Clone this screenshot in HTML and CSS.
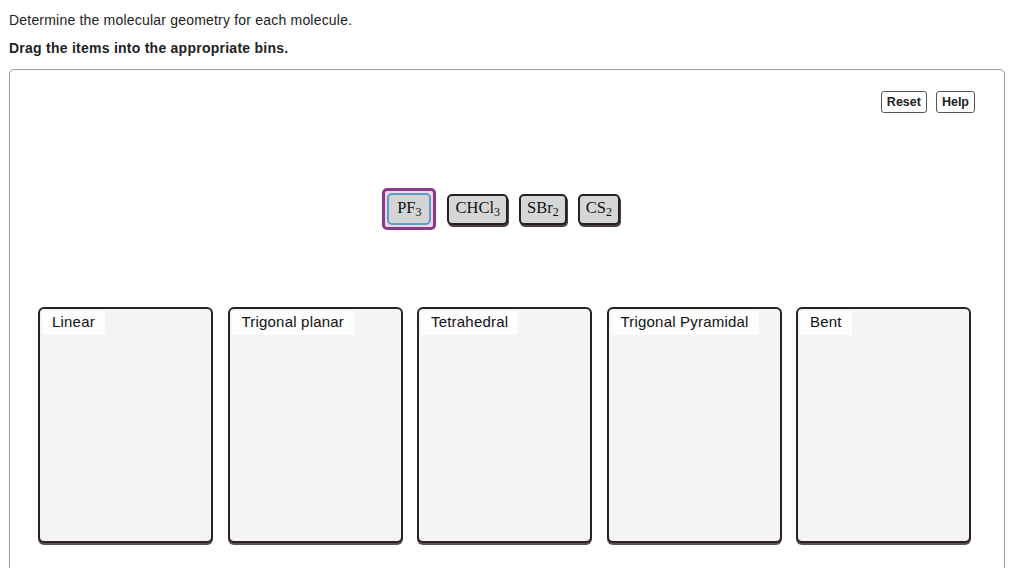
FILE: index.html
```html
<!DOCTYPE html>
<html>
<head>
<meta charset="utf-8">
<link rel="stylesheet" href="styles.css">
</head>
<body>
<div class="intro">
  <p class="q">Determine the molecular geometry for each molecule.</p>
  <p class="instr">Drag the items into the appropriate bins.</p>
</div>
<div class="panel">
  <div class="tools">
    <button class="btn">Reset</button>
    <button class="btn">Help</button>
  </div>
  <div class="chips">
    <div class="chip-sel"><div class="chip active"><span>PF<sub>3</sub></span></div></div>
    <div class="chip"><span>CHCl<sub>3</sub></span></div>
    <div class="chip"><span>SBr<sub>2</sub></span></div>
    <div class="chip"><span>CS<sub>2</sub></span></div>
  </div>
  <div class="bins">
    <div class="bin"><span class="label">Linear</span></div>
    <div class="bin"><span class="label">Trigonal planar</span></div>
    <div class="bin"><span class="label">Tetrahedral</span></div>
    <div class="bin"><span class="label">Trigonal Pyramidal</span></div>
    <div class="bin"><span class="label">Bent</span></div>
  </div>
</div>
</body>
</html>
```
FILE: styles.css
```css
html, body {
  margin: 0;
  padding: 0;
  background: #fff;
  font-family: "Liberation Sans", Arial, sans-serif;
  color: #222;
}
.intro {
  padding: 11px 0 0 9px;
}
.q {
  margin: 0;
  font-size: 14px;
  letter-spacing: 0.2px;
  line-height: 18px;
}
.instr {
  margin: 10px 0 0 0;
  font-size: 14px;
  letter-spacing: 0.25px;
  line-height: 18px;
  font-weight: bold;
}
.panel {
  margin: 12px 19px 0 9px;
  border: 1px solid #9a9a9a;
  border-radius: 5px;
  height: 560px;
  box-sizing: border-box;
}
.tools {
  display: flex;
  justify-content: flex-end;
  gap: 9px;
  padding: 21px 29px 0 0;
}
.btn {
  font-family: "Liberation Sans", Arial, sans-serif;
  font-weight: bold;
  font-size: 12.5px;
  color: #222;
  background: #fff;
  border: 1px solid #555;
  border-radius: 3px;
  height: 22px;
  padding: 0 5px;
  margin: 0;
}
.chips {
  display: flex;
  justify-content: center;
  align-items: center;
  gap: 11px;
  margin-top: 75px;
  padding-right: 12px;
}
.chip {
  font-family: "Liberation Serif", "Times New Roman", serif;
  font-size: 16.5px;
  color: #111;
  background: #d6d6d6;
  border: 2px solid #2a2222;
  border-radius: 5px;
  box-shadow: 1px 2px 0 #4a4040;
  height: 31px;
  padding: 0 6px;
  box-sizing: border-box;
  display: flex;
  align-items: center;
}
.chip span {
  display: block;
  line-height: 18px;
  margin-top: -2px;
}
.chip sub {
  font-size: 12px;
  vertical-align: -3px;
  line-height: 0;
}
.chip-sel {
  border: 3px solid #8a3a88;
  border-radius: 5px;
  padding: 2px;
  background: #e8d8e8;
}
.chip.active {
  border: 2px solid #5a9ec8;
  box-shadow: none;
  background: #d4d4d4;
  height: 32px;
  padding: 0 8px;
}
.bins {
  display: flex;
  gap: 14.5px;
  padding: 77px 0 0 28px;
}
.bin {
  width: 175px;
  height: 236px;
  box-sizing: border-box;
  background: #f4f4f4;
  border: 2px solid #2a2222;
  border-radius: 6px;
  box-shadow: 0 2px 0 #5a5050;
  padding: 2px;
}
.label {
  display: inline-block;
  background: #fdfdfd;
  font-size: 15px;
  letter-spacing: 0.2px;
  color: #111;
  padding: 3px 10px 5px 10px;
  line-height: 16px;
}
```
